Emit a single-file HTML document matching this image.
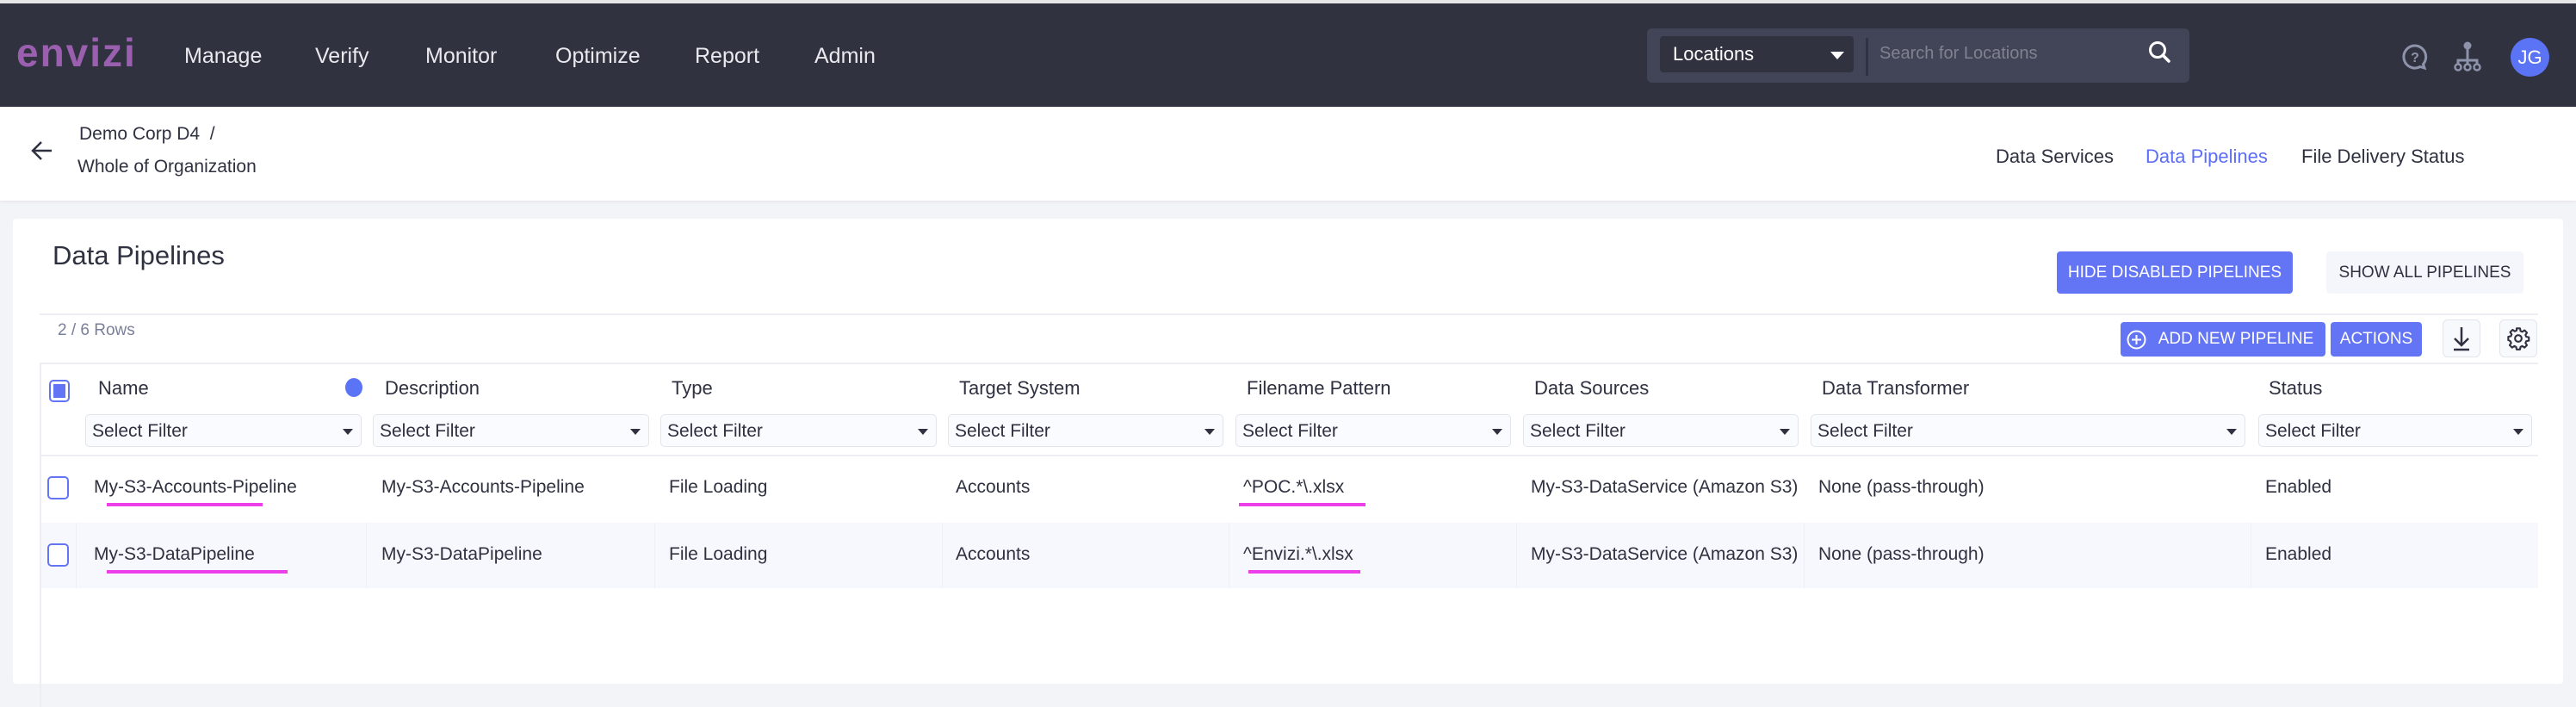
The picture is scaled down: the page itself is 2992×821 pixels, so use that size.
<!DOCTYPE html>
<html><head><meta charset="utf-8"><style>
*{box-sizing:border-box;margin:0;padding:0}
body{width:2992px;height:788px;overflow:hidden;background:#f3f4f7;font-family:"Liberation Sans",sans-serif;color:#2f3140;position:relative}
.a{position:absolute;white-space:nowrap}
.nav{position:absolute;left:0;top:4px;width:2992px;height:120px;background:#31323f}
.top{position:absolute;left:0;top:0;width:2992px;height:4px;background:#e6e6e8}
.ni{position:absolute;top:47px;color:#e9e9ee;font-size:25px}
.hdr{position:absolute;left:0;top:124px;width:2992px;height:109px;background:#fff;box-shadow:0 2px 4px rgba(0,0,0,.05)}
.card{position:absolute;left:15px;top:254px;width:2962px;height:540px;background:#fff;border-radius:4px}
.btn{position:absolute;background:#6375f5;color:#fff;font-size:20px;border-radius:4px;text-align:center;white-space:nowrap}
.th{position:absolute;top:438px;font-size:22px;color:#2f3140}
.flt{position:absolute;top:481px;height:38px;border:1px solid #e2e4ee;border-radius:5px;background:#fafbfe;font-size:21px;padding:7px 0 0 7px;color:#2f3140}
.flt:after{content:"";position:absolute;right:9px;top:16px;border-left:6px solid transparent;border-right:6px solid transparent;border-top:7px solid #2f3140}
.td{position:absolute;font-size:21px;color:#2f3140}
.cb{position:absolute;left:55px;width:25px;height:27px;border:2px solid #6375f5;border-radius:5px;background:#fff}
.ul{position:absolute;height:4px;background:#ec3fea}
</style></head><body>
<div class="top"></div>
<div class="nav">
 <div class="a" style="left:19px;top:34px;font-size:46px;line-height:46px;color:#9b5fb0;letter-spacing:2px;font-weight:bold">envizi</div>
 <div class="ni" style="left:214px">Manage</div>
 <div class="ni" style="left:366px">Verify</div>
 <div class="ni" style="left:494px">Monitor</div>
 <div class="ni" style="left:645px">Optimize</div>
 <div class="ni" style="left:807px">Report</div>
 <div class="ni" style="left:946px">Admin</div>
 <div class="a" style="left:1913px;top:29px;width:630px;height:63px;background:#424557;border-radius:6px"></div>
 <div class="a" style="left:1928px;top:38px;width:225px;height:42px;background:#31323f;border-radius:4px;color:#fff;font-size:22px;padding:8px 0 0 15px">Locations</div>
 <div class="a" style="left:2126px;top:56px;border-left:8px solid transparent;border-right:8px solid transparent;border-top:9px solid #fff"></div>
 <div class="a" style="left:2167px;top:40px;width:3px;height:44px;background:#31323f"></div>
 <div class="a" style="left:2183px;top:47px;font-size:20px;color:#80828f">Search for Locations</div>
 <svg class="a" style="left:2494px;top:42px" width="30" height="30" viewBox="0 0 30 30"><circle cx="12" cy="12" r="8.5" fill="none" stroke="#fff" stroke-width="3"/><path d="M18 18 L25 25" stroke="#fff" stroke-width="3.5" stroke-linecap="round"/></svg>
 <svg class="a" style="left:2789px;top:46px" width="32" height="32" viewBox="0 0 32 32"><path d="M16 3a13 13 0 1 0 6 24.5l5 1.5-1.5-4.5A13 13 0 0 0 16 3z" fill="none" stroke="#8d93aa" stroke-width="3"/><text x="16" y="22" font-size="16" font-weight="bold" fill="#8d93aa" text-anchor="middle" font-family="Liberation Sans">?</text></svg>
 <svg class="a" style="left:2849px;top:44px" width="34" height="36" viewBox="0 0 34 36"><circle cx="17" cy="5" r="4.5" fill="#8d93aa"/><path d="M17 8v12M6 27v-5h22v5M17 20v7" stroke="#8d93aa" stroke-width="3" fill="none"/><circle cx="6" cy="30" r="3.5" fill="none" stroke="#8d93aa" stroke-width="2.5"/><circle cx="17" cy="30" r="3.5" fill="none" stroke="#8d93aa" stroke-width="2.5"/><circle cx="28" cy="30" r="3.5" fill="none" stroke="#8d93aa" stroke-width="2.5"/></svg>
 <div class="a" style="left:2916px;top:40px;width:45px;height:45px;border-radius:50%;background:#5b73f5;color:#fff;font-size:22px;text-align:center;line-height:45px">JG</div>
</div>
<div class="hdr">
 <svg class="a" style="left:36px;top:39px" width="26" height="24" viewBox="0 0 26 24"><path d="M24 12H3M12 2L2 12l10 10" stroke="#2f3140" stroke-width="2.5" fill="none"/></svg>
 <div class="a" style="left:92px;top:20px;font-size:21px">Demo Corp D4 &nbsp;/</div>
 <div class="a" style="left:90px;top:58px;font-size:21px">Whole of Organization</div>
 <div class="a" style="left:2318px;top:45px;font-size:22px">Data Services</div>
 <div class="a" style="left:2492px;top:45px;font-size:22px;color:#5b6ef5">Data Pipelines</div>
 <div class="a" style="left:2673px;top:45px;font-size:22px">File Delivery Status</div>
</div>
<div class="card"></div>
<div class="a" style="left:61px;top:279px;font-size:31px">Data Pipelines</div>
<div class="btn" style="left:2389px;top:292px;width:274px;height:49px;line-height:49px;font-size:19px">HIDE DISABLED PIPELINES</div>
<div class="btn" style="left:2702px;top:292px;width:229px;height:49px;line-height:49px;background:#f5f6fb;color:#2f3140;font-size:19px">SHOW ALL PIPELINES</div>
<div class="a" style="left:46px;top:364px;width:2902px;height:2px;background:#eceef4"></div>
<div class="a" style="left:67px;top:373px;font-size:19px;color:#7a7f9a">2 / 6 Rows</div>
<div class="btn" style="left:2463px;top:374px;width:238px;height:40px;line-height:40px;padding-left:30px;font-size:19px">ADD NEW PIPELINE</div>
<svg class="a" style="left:2470px;top:383px" width="23" height="23" viewBox="0 0 23 23"><circle cx="11.5" cy="11.5" r="10" fill="none" stroke="#fff" stroke-width="2"/><path d="M11.5 6v11M6 11.5h11" stroke="#fff" stroke-width="2"/></svg>
<div class="btn" style="left:2707px;top:374px;width:106px;height:40px;line-height:40px;font-size:19px">ACTIONS</div>
<div class="a" style="left:2837px;top:371px;width:44px;height:44px;border:1px solid #e2e4ee;border-radius:6px;background:#f8f9fd"></div>
<svg class="a" style="left:2847px;top:378px" width="24" height="30" viewBox="0 0 24 30"><path d="M12 2v21M4 15l8 8 8-8M3 28h18" stroke="#2f3140" stroke-width="2.5" fill="none"/></svg>
<div class="a" style="left:2903px;top:371px;width:44px;height:44px;border:1px solid #e2e4ee;border-radius:6px;background:#f8f9fd"></div>
<svg class="a" style="left:2911px;top:379px" width="28" height="28" viewBox="0 0 24 24"><path d="M10.3 2h3.4l.5 2.6 1.8.8 2.2-1.5 2.4 2.4-1.5 2.2.8 1.8 2.6.5v3.4l-2.6.5-.8 1.8 1.5 2.2-2.4 2.4-2.2-1.5-1.8.8-.5 2.6h-3.4l-.5-2.6-1.8-.8-2.2 1.5-2.4-2.4 1.5-2.2-.8-1.8L2 13.7v-3.4l2.6-.5.8-1.8-1.5-2.2 2.4-2.4 2.2 1.5 1.8-.8z" fill="none" stroke="#2f3140" stroke-width="1.8" stroke-linejoin="round"/><circle cx="12" cy="12" r="3.3" fill="none" stroke="#2f3140" stroke-width="1.8"/></svg>
<div class="a" style="left:46px;top:421px;width:2902px;height:2px;background:#eceef4"></div>
<div class="a" style="left:46px;top:421px;width:2px;height:400px;background:#eceef4"></div>
<div class="a" style="left:57px;top:441px;width:24px;height:26px;border:2px solid #6375f5;border-radius:5px;background:#fff"><div style="margin:3px;width:14px;height:16px;background:#6375f5"></div></div>
<div class="th" style="left:114px">Name</div>
<div class="a" style="left:401px;top:439px;width:20px;height:22px;border-radius:50%;background:#5b73f5"></div>
<div class="th" style="left:447px">Description</div>
<div class="th" style="left:780px">Type</div>
<div class="th" style="left:1114px">Target System</div>
<div class="th" style="left:1448px">Filename Pattern</div>
<div class="th" style="left:1782px">Data Sources</div>
<div class="th" style="left:2116px">Data Transformer</div>
<div class="th" style="left:2635px">Status</div>
<div class="flt" style="left:99px;width:321px">Select Filter</div>
<div class="flt" style="left:433px;width:321px">Select Filter</div>
<div class="flt" style="left:767px;width:321px">Select Filter</div>
<div class="flt" style="left:1101px;width:320px">Select Filter</div>
<div class="flt" style="left:1435px;width:320px">Select Filter</div>
<div class="flt" style="left:1769px;width:320px">Select Filter</div>
<div class="flt" style="left:2103px;width:505px">Select Filter</div>
<div class="flt" style="left:2623px;width:318px">Select Filter</div>
<div class="a" style="left:46px;top:528px;width:2902px;height:2px;background:#eceef4"></div>
<div class="a" style="left:48px;top:607px;width:2900px;height:76px;background:#f7f8fd"></div>
<div class="a" style="left:88px;top:607px;width:1px;height:76px;background:#eef0f6"></div>
<div class="a" style="left:425px;top:607px;width:1px;height:76px;background:#eef0f6"></div>
<div class="a" style="left:760px;top:607px;width:1px;height:76px;background:#eef0f6"></div>
<div class="a" style="left:1094px;top:607px;width:1px;height:76px;background:#eef0f6"></div>
<div class="a" style="left:1427px;top:607px;width:1px;height:76px;background:#eef0f6"></div>
<div class="a" style="left:1761px;top:607px;width:1px;height:76px;background:#eef0f6"></div>
<div class="a" style="left:2095px;top:607px;width:1px;height:76px;background:#eef0f6"></div>
<div class="a" style="left:2614px;top:607px;width:1px;height:76px;background:#eef0f6"></div>
<div class="cb" style="top:553px"></div>
<div class="cb" style="top:631px"></div>
<div class="td" style="left:109px;top:554px">My-S3-Accounts-Pipeline</div>
<div class="td" style="left:443px;top:554px">My-S3-Accounts-Pipeline</div>
<div class="td" style="left:777px;top:554px">File Loading</div>
<div class="td" style="left:1110px;top:554px">Accounts</div>
<div class="td" style="left:1444px;top:554px">^POC.*\.xlsx</div>
<div class="td" style="left:1778px;top:554px">My-S3-DataService (Amazon S3)</div>
<div class="td" style="left:2112px;top:554px">None (pass-through)</div>
<div class="td" style="left:2631px;top:554px">Enabled</div>
<div class="td" style="left:109px;top:632px">My-S3-DataPipeline</div>
<div class="td" style="left:443px;top:632px">My-S3-DataPipeline</div>
<div class="td" style="left:777px;top:632px">File Loading</div>
<div class="td" style="left:1110px;top:632px">Accounts</div>
<div class="td" style="left:1444px;top:632px">^Envizi.*\.xlsx</div>
<div class="td" style="left:1778px;top:632px">My-S3-DataService (Amazon S3)</div>
<div class="td" style="left:2112px;top:632px">None (pass-through)</div>
<div class="td" style="left:2631px;top:632px">Enabled</div>
<div class="ul" style="left:124px;top:584px;width:181px"></div>
<div class="ul" style="left:124px;top:662px;width:210px"></div>
<div class="ul" style="left:1439px;top:584px;width:147px"></div>
<div class="ul" style="left:1450px;top:662px;width:130px"></div>
</body></html>
